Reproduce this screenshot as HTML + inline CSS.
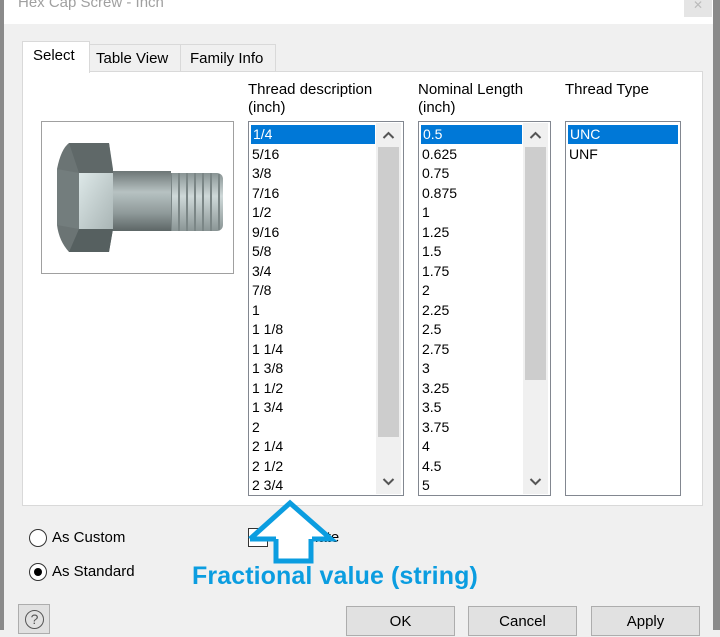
<!DOCTYPE html>
<html><head><style>
*{margin:0;padding:0;box-sizing:border-box}
body{width:720px;height:630px;overflow:hidden;background:#f0f0f0;font-family:"Liberation Sans",sans-serif;font-size:14px;color:#000;position:relative}
.a{position:absolute}
.list{position:absolute;background:#fff;border:1px solid #828790}
.it{position:absolute;left:4px;height:19px;line-height:19px;font-size:14px;white-space:nowrap}
.sel{background:#0078d7;color:#fff;left:3px;padding-left:2px}
.sb{position:absolute;top:1px;bottom:1px;background:#f0f0f0}
.th{position:absolute;left:2px;right:2px;background:#cdcdcd}
.btn{position:absolute;top:606px;height:30px;background:#e1e1e1;border:1px solid #adadad;text-align:center;line-height:30px;font-size:15px}
</style></head><body>
<div class="a" style="left:0;top:0;width:720px;height:24px;background:#fff"></div>
<div class="a" style="left:18px;top:-6px;font-size:15px;color:#a0a0a0">Hex Cap Screw - Inch</div>
<div class="a" style="left:684px;top:0;width:28px;height:17px;background:#e5e5e5;color:#bbb;text-align:center;font-size:12px;line-height:10px">✕</div>
<div class="a" style="left:0;top:0;width:4px;height:630px;background:#8a8a8a"></div>
<div class="a" style="left:713px;top:0;width:7px;height:630px;background:#8a8a8a"></div>

<div class="a" style="left:22px;top:71px;width:681px;height:435px;background:#fff;border:1px solid #d9d9d9"></div>
<div class="a" style="left:22px;top:41px;width:68px;height:32px;background:#fff;border:1px solid #d9d9d9;border-bottom:none;padding:5px 0 0 10px;font-size:15px">Select</div>
<div class="a" style="left:89px;top:44px;width:92px;height:27px;background:#f0f0f0;border:1px solid #d9d9d9;border-bottom:none;padding:5px 0 0 6px;font-size:15px">Table View</div>
<div class="a" style="left:180px;top:44px;width:96px;height:27px;background:#f0f0f0;border:1px solid #d9d9d9;border-bottom:none;padding:5px 0 0 9px;font-size:15px">Family Info</div>

<div class="a" style="left:41px;top:121px;width:193px;height:153px;background:#fff;border:1px solid #a0a0a0"></div>
<svg class="a" style="left:41px;top:121px" width="193" height="153">
<defs>
<linearGradient id="sh" x1="0" y1="0" x2="0" y2="1"><stop offset="0" stop-color="#6d7676"/><stop offset=".35" stop-color="#b7c2c2"/><stop offset=".7" stop-color="#8f9a9a"/><stop offset="1" stop-color="#5d6666"/></linearGradient>
<linearGradient id="th" x1="0" y1="0" x2="0" y2="1"><stop offset="0" stop-color="#8a9595"/><stop offset=".4" stop-color="#cfd9d9"/><stop offset="1" stop-color="#8a9595"/></linearGradient>
<linearGradient id="fc" x1="0" y1="0" x2="1" y2="1"><stop offset="0" stop-color="#dde8e8"/><stop offset="1" stop-color="#a9b5b5"/></linearGradient>
</defs>
<rect x="124" y="52" width="58" height="58" rx="6" fill="url(#th)"/>
<g stroke="#7b8686" stroke-width="2" fill="none">
<path d="M130 52v58M138 52v58M146 52v58M154 52v58M162 52v58M170 52v58M178 53v56"/></g>
<rect x="68" y="50" width="62" height="60" fill="url(#sh)"/>
<path d="M16 48 Q20 28 28 22 L68 22 L72 48 L72 108 L68 131 L28 131 Q18 120 16 104 Z" fill="#6b7474"/>
<path d="M28 22 L68 22 L72 52 L38 52 Z" fill="#5f6868"/>
<path d="M38 52 L72 52 L72 108 L38 108 Z" fill="url(#fc)"/>
<path d="M38 108 L72 108 L68 131 L28 131 Z" fill="#566060"/>
<path d="M16 48 L38 52 L38 108 L16 104 Z" fill="#737d7d"/>
</svg>

<div class="a" style="left:248px;top:81px;line-height:18px;font-size:15px">Thread description<br>(inch)</div>
<div class="a" style="left:418px;top:81px;line-height:18px;font-size:15px">Nominal Length<br>(inch)</div>
<div class="a" style="left:565px;top:81px;line-height:18px;font-size:15px">Thread Type</div>

<div class="list" style="left:248px;top:121px;width:156px;height:375px">
<div class="sb" style="left:127px;width:25px">
<svg class="a" style="left:6px;top:8px" width="13" height="9"><path d="M1.5 7 L6.5 2 L11.5 7" stroke="#555" stroke-width="2" fill="none"/></svg>
<div class="th" style="top:24px;height:290px"></div>
<svg class="a" style="left:6px;bottom:8px" width="13" height="9"><path d="M1.5 2 L6.5 7 L11.5 2" stroke="#555" stroke-width="2" fill="none"/></svg></div>
</div>
<div class="list" style="left:418px;top:121px;width:133px;height:375px">
<div class="sb" style="left:104px;width:25px">
<svg class="a" style="left:6px;top:8px" width="13" height="9"><path d="M1.5 7 L6.5 2 L11.5 7" stroke="#555" stroke-width="2" fill="none"/></svg>
<div class="th" style="top:24px;height:233px"></div>
<svg class="a" style="left:6px;bottom:8px" width="13" height="9"><path d="M1.5 2 L6.5 7 L11.5 2" stroke="#555" stroke-width="2" fill="none"/></svg></div>
</div>
<div class="list" style="left:565px;top:121px;width:116px;height:375px"></div>

<div class="a" style="left:248px;top:121px;width:130px;height:374px;overflow:hidden">
<div class="it sel" style="top:4px;width:124px">1/4</div>
<div class="it" style="top:23.5px">5/16</div><div class="it" style="top:43px">3/8</div><div class="it" style="top:62.5px">7/16</div><div class="it" style="top:82px">1/2</div><div class="it" style="top:101.5px">9/16</div><div class="it" style="top:121px">5/8</div><div class="it" style="top:140.5px">3/4</div><div class="it" style="top:160px">7/8</div><div class="it" style="top:179.5px">1</div><div class="it" style="top:199px">1 1/8</div><div class="it" style="top:218.5px">1 1/4</div><div class="it" style="top:238px">1 3/8</div><div class="it" style="top:257.5px">1 1/2</div><div class="it" style="top:277px">1 3/4</div><div class="it" style="top:296.5px">2</div><div class="it" style="top:316px">2 1/4</div><div class="it" style="top:335.5px">2 1/2</div><div class="it" style="top:355px">2 3/4</div>
</div>
<div class="a" style="left:418px;top:121px;width:105px;height:374px;overflow:hidden">
<div class="it sel" style="top:4px;width:101px">0.5</div>
<div class="it" style="top:23.5px">0.625</div><div class="it" style="top:43px">0.75</div><div class="it" style="top:62.5px">0.875</div><div class="it" style="top:82px">1</div><div class="it" style="top:101.5px">1.25</div><div class="it" style="top:121px">1.5</div><div class="it" style="top:140.5px">1.75</div><div class="it" style="top:160px">2</div><div class="it" style="top:179.5px">2.25</div><div class="it" style="top:199px">2.5</div><div class="it" style="top:218.5px">2.75</div><div class="it" style="top:238px">3</div><div class="it" style="top:257.5px">3.25</div><div class="it" style="top:277px">3.5</div><div class="it" style="top:296.5px">3.75</div><div class="it" style="top:316px">4</div><div class="it" style="top:335.5px">4.5</div><div class="it" style="top:355px">5</div>
</div>
<div class="a" style="left:565px;top:121px;width:116px;height:60px">
<div class="it sel" style="top:4px;width:110px">UNC</div>
<div class="it" style="top:23.5px">UNF</div>
</div>

<div class="a" style="left:29px;top:529px;width:18px;height:18px;border:1px solid #333;border-radius:50%;background:#fff"></div>
<div class="a" style="left:52px;top:529px;font-size:15px">As Custom</div>
<div class="a" style="left:29px;top:563px;width:18px;height:18px;border:1px solid #333;border-radius:50%;background:#fff"><div class="a" style="left:4px;top:4px;width:8px;height:8px;border-radius:50%;background:#000"></div></div>
<div class="a" style="left:52px;top:563px;font-size:15px">As Standard</div>
<div class="a" style="left:248px;top:528px;width:20px;height:19px;border:1px solid #333;background:#fff"></div>
<div class="a" style="left:305px;top:529px;font-size:15px">Plate</div>

<svg class="a" style="left:240px;top:498px" width="110" height="70">
<path d="M50 6 L10 42 L34 42 L34 64 L72 64 L72 42 L92 42 Z" fill="#fff" stroke="none"/>
<path d="M10 41 L50 5 L91 41 L72 41 M36 41 L10 41 M36 41 L36 63 L71 63 L71 41" fill="none" stroke="#0b9de0" stroke-width="5" stroke-linejoin="miter"/>
</svg>
<div class="a" style="left:192px;top:562px;font-size:25px;font-weight:bold;color:#0b9de0;letter-spacing:0.1px">Fractional value (string)</div>

<div class="a" style="left:18px;top:604px;width:32px;height:30px;background:#e1e1e1;border:1px solid #adadad"><div class="a" style="left:6px;top:5px;width:19px;height:19px;border:1.5px solid #555;border-radius:50%;text-align:center;font-size:14px;line-height:17px;color:#555">?</div></div>
<div class="btn" style="left:346px;width:109px">OK</div>
<div class="btn" style="left:468px;width:109px">Cancel</div>
<div class="btn" style="left:591px;width:109px">Apply</div>
</body></html>
